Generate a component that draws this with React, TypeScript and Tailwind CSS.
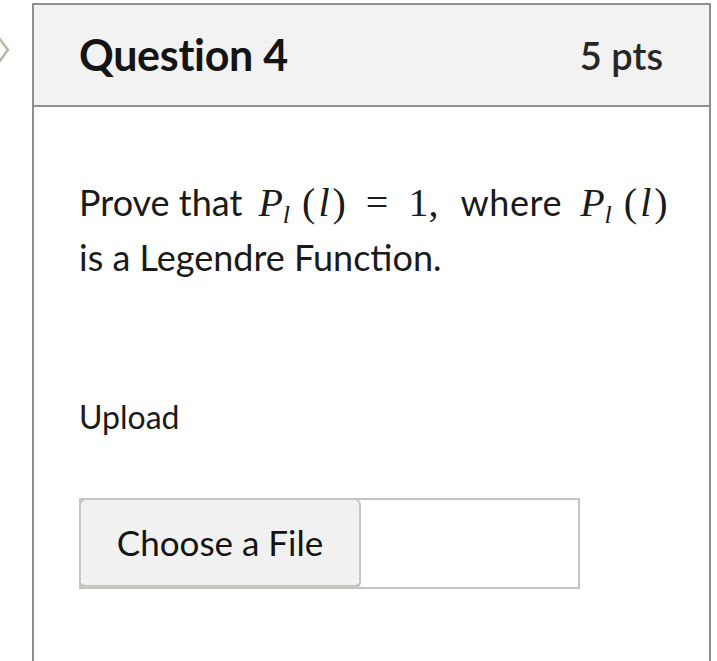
export default function App() {
  return (
    <div className="flex h-[661px] w-[717px] overflow-hidden bg-white font-['Lato',sans-serif] text-[#1a1a1a]">
      {/* chevron outside the card */}
      <div className="w-[32px] shrink-0 pt-[36px]">
        <svg width="14" height="28" viewBox="0 0 14 28" className="-ml-[3px]">
          <polyline points="2,2 11,14 2,26" fill="none" stroke="#bdb6a6" strokeWidth="2.5" />
        </svg>
      </div>

      <div className="mt-[3px] w-[679px] shrink-0 border-x-2 border-t-2 border-[#8f8f8f]">
        <div className="flex h-[102px] items-center justify-between border-b-2 border-[#8f8f8f] bg-[#f2f2f2] pl-[45px] pr-[46px]">
          <h2 className="text-[43px] font-bold tracking-[-0.3px] text-[#141414]">Question 4</h2>
          <span className="text-[38px] font-semibold text-[#262626]">5 pts</span>
        </div>

        <div className="pl-[45px] pt-[68px]">
          <p className="text-[36px] leading-[55px]">
            Prove that
            <span className="ml-[16px] font-['Liberation_Serif',serif] text-[40px]">
              <i>P</i>
              <sub className="text-[26px] italic">l</sub>
              <span className="ml-[12px]">(</span>
              <i className="mx-[3px]">l</i>
              <span>)</span>
              <span className="mx-[20px]">=</span>
              <span>1,</span>
            </span>
            <span className="ml-[22px] tracking-[0.6px]">where</span>
            <span className="ml-[18px] font-['Liberation_Serif',serif] text-[40px]">
              <i>P</i>
              <sub className="text-[26px] italic">l</sub>
              <span className="ml-[12px]">(</span>
              <i className="mx-[3px]">l</i>
              <span>)</span>
            </span>
            <br />
            is a Legendre Function.
          </p>

          <p className="mt-[108px] text-[32px]">Upload</p>

          <div className="mt-[57px] flex h-[91px] w-[501px] border-2 border-[#c4c4c4]">
            <button
              type="button"
              className="-my-[2px] -ml-[2px] flex w-[282px] items-center justify-center rounded-[7px] border-2 border-b-[4px] border-[#c9c6c2] bg-[#f1f1f1] text-[35px] text-[#141414]"
            >
              Choose a File
            </button>
          </div>
        </div>
      </div>
    </div>
  );
}
